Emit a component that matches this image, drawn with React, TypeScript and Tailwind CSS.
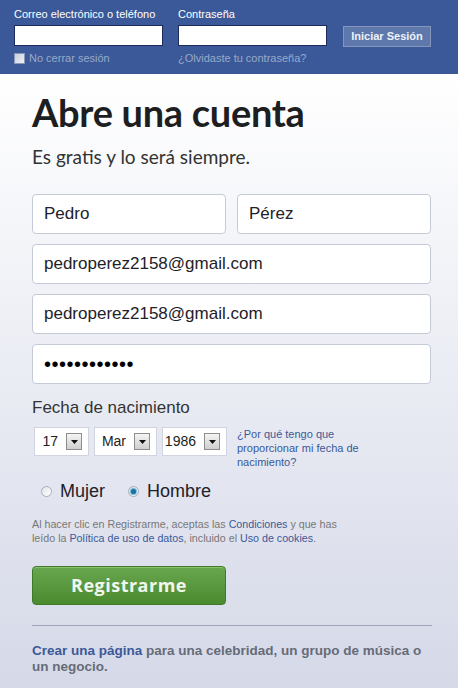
const tahoma = { fontFamily: '"Liberation Sans", Arial, sans-serif' };

const Select = ({ value, width }: { value: string; width: string }) => (
  <div className={`flex h-[29px] ${width} items-center justify-end gap-[8px] border border-[#cfd4df] bg-white pr-[6px] text-[14px] text-[#222]`}>
    <span>{value}</span>
    <span className="flex h-[17px] w-[16px] items-center justify-center border border-[#8d8d8d] bg-gradient-to-b from-[#f4f4f4] to-[#cfcfcf]">
      <svg width="7" height="4" viewBox="0 0 7 4">
        <path d="M0 0h7L3.5 4z" fill="#111" />
      </svg>
    </span>
  </div>
);

const Radio = ({ checked }: { checked?: boolean }) => (
  <span className="flex h-[11px] w-[11px] items-center justify-center rounded-full border border-[#a9adb6] bg-gradient-to-br from-[#e2e4e8] to-white">
    {checked && <span className="h-[5px] w-[5px] rounded-full bg-[#1f6f9a] shadow-[0_0_1px_1px_#5eb3d8]" />}
  </span>
);

const Field = ({ children, className = '' }: { children: React.ReactNode; className?: string }) => (
  <div className={`flex h-[40px] items-center rounded-[4px] border border-[#c4cad6] bg-white px-[11px] text-[#1d2129] ${className}`}>
    {children}
  </div>
);

export default function App() {
  return (
    <div className="flex h-[688px] w-[458px] flex-col overflow-hidden" style={tahoma}>
      <div className="flex h-[74px] shrink-0 gap-[15px] bg-[#3b5998] px-[14px] pt-[7px]">
        <div className="flex w-[149px] flex-col">
          <span className="text-[11px] leading-[14px] text-white">Correo electrónico o teléfono</span>
          <div className="mt-[4px] h-[21px] border border-[#1d2a5b] bg-white" />
          <div className="mt-[6px] flex items-center gap-[4px]">
            <span className="h-[11px] w-[11px] border border-[#8a98b8] bg-gradient-to-br from-[#c8cfdd] to-[#eef0f5]" />
            <span className="text-[11px] leading-[13px] text-[#98a9ca]">No cerrar sesión</span>
          </div>
        </div>
        <div className="flex w-[149px] flex-col">
          <span className="text-[11px] leading-[14px] text-white">Contraseña</span>
          <div className="mt-[4px] h-[21px] border border-[#1d2a5b] bg-white" />
          <span className="mt-[6px] text-[11px] leading-[13px] text-[#98a9ca]">¿Olvidaste tu contraseña?</span>
        </div>
        <div className="ml-[1px] pt-[19px]">
          <div className="flex h-[21px] w-[88px] items-center justify-center border border-[#8595bd] bg-[#5f78ab] text-[11px] font-bold text-[#eef1f7]">
            Iniciar Sesión
          </div>
        </div>
      </div>

      <div className="flex flex-1 flex-col bg-gradient-to-b from-white to-[#d5d9e8] px-[32px] pt-[16px]">
        <h1 className="text-[38px] leading-[44px] font-bold tracking-[-0.3px] text-[#1c1e21]" style={{ fontFamily: 'Lato, sans-serif' }}>
          Abre una cuenta
        </h1>
        <p className="mt-[12px] text-[19px] leading-[22px] text-[#333]" style={{ fontFamily: 'Lato, sans-serif' }}>
          Es gratis y lo será siempre.
        </p>

        <div className="mt-[26px] flex w-[399px] flex-col gap-[10px] text-[17px]">
          <div className="flex gap-[11px]">
            <Field className="w-[194px]">Pedro</Field>
            <Field className="w-[194px]">Pérez</Field>
          </div>
          <Field>pedroperez2158@gmail.com</Field>
          <Field>pedroperez2158@gmail.com</Field>
          <Field>
            <span className="text-[20px] tracking-[0.5px] text-black">••••••••••••</span>
          </Field>
        </div>

        <div className="mt-[13px] text-[17px] leading-[22px] text-[#333]">Fecha de nacimiento</div>
        <div className="mt-[8px] flex items-start gap-[10px] pl-[2px]">
          <div className="flex gap-[5px]">
            <Select value="17" width="w-[55px]" />
            <Select value="Mar" width="w-[63px]" />
            <Select value="1986" width="w-[65px]" />
          </div>
          <p className="w-[150px] text-[11px] leading-[14px] text-[#3b5998]">
            ¿Por qué tengo que proporcionar mi fecha de nacimiento?
          </p>
        </div>

        <div className="mt-[11px] flex items-center pl-[9px] text-[18px] leading-[22px] text-[#1d2129]">
          <Radio />
          <span className="ml-[8px]">Mujer</span>
          <span className="ml-[23px]"><Radio checked /></span>
          <span className="ml-[8px]">Hombre</span>
        </div>

        <p className="mt-[15px] w-[312px] text-[10.7px] leading-[14px] text-[#777]">
          Al hacer clic en Registrarme, aceptas las <span className="text-[#3b5998]">Condiciones</span> y que has leído la{' '}
          <span className="text-[#3b5998]">Política de uso de datos</span>, incluido el <span className="text-[#3b5998]">Uso de cookies</span>.
        </p>

        <div className="mt-[21px] flex h-[39px] w-[194px] items-center justify-center rounded-[4px] border border-[#3f7a28] bg-gradient-to-b from-[#69a74e] to-[#4b8a2f] text-[18px] font-bold tracking-[0.5px] text-[#f2f6ee] shadow-[inset_0_1px_0_#8cc06f]" style={{ fontFamily: '"Open Sans", sans-serif' }}>
          Registrarme
        </div>

        <div className="mt-[20px] h-px w-[400px] bg-[#9da3b6]" />

        <p className="mt-[17px] text-[13.5px] leading-[16px] font-bold text-[#666b78]">
          <span className="text-[#3b5998]">Crear una página</span> para una celebridad, un grupo de música o un negocio.
        </p>
      </div>
    </div>
  );
}
